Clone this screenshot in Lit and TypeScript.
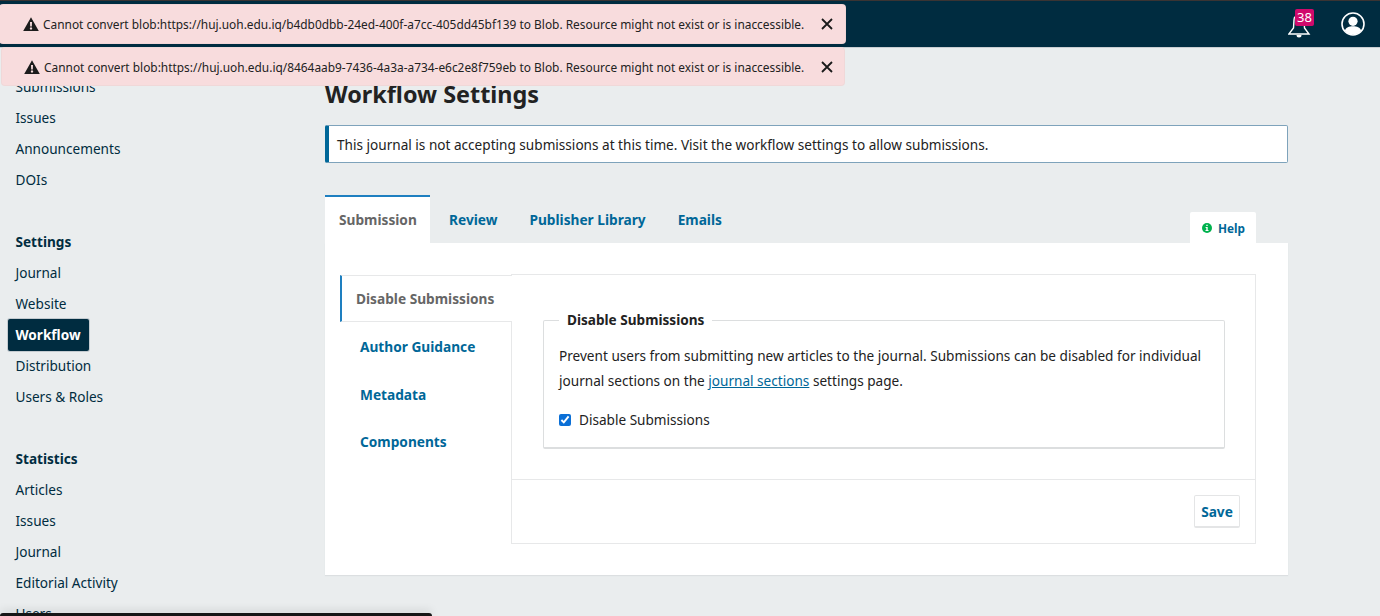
import { LitElement, html, css } from "lit";
import { customElement } from "lit/decorators.js";

const warn = html`<svg class="warn" viewBox="0 0 16 14" width="16" height="14"><path fill="#1c1c1c" fill-rule="evenodd" d="M8 0.2 L15.8 14 H0.2 Z M7 5 L7.2 9.6 H8.8 L9 5 Z M8 10.3 a1.2 1.2 0 1 0 0.01 0 Z"/></svg>`;
const closeX = html`<svg class="x" viewBox="0 0 12 12" width="12" height="12"><path d="M1 1 L11 11 M11 1 L1 11" stroke="#1a1a1a" stroke-width="1.8" fill="none"/></svg>`;

@customElement("app-root")
export class AppRoot extends LitElement {
  static styles = css`
    :host { display: block; width: 1380px; height: 616px; position: relative; overflow: hidden; background: #eaedee; font-family: "Noto Sans", sans-serif; font-size: 13.6px; color: #222; }
    * { box-sizing: border-box; }
    header { height: 47px; background: #002c40; border-top: 1px solid #3a3433; display: flex; justify-content: flex-end; align-items: center; padding-right: 15px; gap: 29px; box-shadow: 0 1px 0 #c9ced2; }
    .bell { position: relative; width: 24px; height: 26px; margin-top: 2px; }
    .badge { position: absolute; left: 7px; top: -3px; width: 19px; height: 17px; background: #d00a6c; color: #fff; font-size: 13px; line-height: 17px; text-align: center; border-radius: 2px; }
    .bell svg, .avatar { display: block; }
    .layout { display: flex; height: 569px; }
    nav { width: 325px; padding: 24px 0 0 8px; flex: none; color: #002c40; }
    .item { display: block; height: 31px; line-height: 31px; padding-left: 7.5px; white-space: nowrap; }
    .head { font-weight: 700; margin-top: 31px; }
    .current { width: 81px; height: 32px; margin: -0.5px 0; line-height: 31px; background: #002c40; color: #fff; font-weight: 700; border-radius: 2px; box-shadow: 0 0 0 1px #c4cbd0; }
    main { width: 963px; flex: none; }
    h1 { margin: 0; padding-top: 29px; font-size: 23.4px; line-height: 36px; font-weight: 700; color: #222; }
    .notice { margin-top: 13px; height: 38px; background: #fff; border: 1px solid #7ea3bb; border-left: 4px solid #006798; border-radius: 2px; padding-left: 8px; line-height: 38px; color: #222; }
    .tabs { margin-top: 32px; height: 48px; display: flex; position: relative; }
    .tab { color: #006798; font-weight: 700; font-size: 13.7px; padding: 0 16px; line-height: 46px; margin-top: 2px; white-space: nowrap; }
    .tab.on { background: #fff; color: #666; border-top: 2px solid #1e7fc0; margin-top: 0; width: 105px; padding: 0 14px; line-height: 46px; margin-right: 3px; }
    .help { position: absolute; right: 32px; bottom: 0; width: 66px; height: 31px; background: #fff; border-radius: 2px 2px 0 0; color: #006798; font-weight: 700; font-size: 11.8px; display: flex; align-items: center; gap: 6px; padding-left: 12px; }
    .panel { background: #fff; height: 332px; padding: 31px 32px 31px 15px; box-shadow: 0 1px 1px #dcdfe1; display: flex; }
    .side { width: 172px; flex: none; padding-top: 1px; margin-right: -1px; position: relative; z-index: 1; }
    .sidetab { height: 47.5px; line-height: 49px; padding-left: 20px; color: #006798; font-weight: 700; font-size: 13.7px; white-space: nowrap; }
    .sidetab.on { height: 47px; color: #666; padding-left: 14px; border-left: 2px solid #1e7fc0; border-top: 1px solid #e7e8e9; border-bottom: 1px solid #e7e8e9; background: #fff; line-height: 45px; position: relative; }
    .content { flex: 1; border: 1px solid #e7e8e9; display: flex; flex-direction: column; }
    .body { height: 205px; padding: 35px 30px 0 31px; border-bottom: 1px solid #e7e8e9; }
    fieldset { margin: 0; border: 1px solid #dcdedf; border-bottom-width: 2px; border-radius: 2px; padding: 13px 15px 0 15px; height: 139px; }
    legend { font-weight: 700; padding: 0 8px; margin-left: 0; line-height: 20px; color: #222; }
    p { margin: 0; line-height: 25px; color: #222; }
    a { color: #006798; text-decoration: underline; }
    label { display: flex; align-items: center; gap: 8px; margin-top: 14px; line-height: 25px; }
    input { margin: 0; width: 12px; height: 12px; accent-color: #0b6fd6; }
    .foot { flex: 1; display: flex; justify-content: flex-end; padding: 15px 15px 0 0; }
    button { width: 46px; height: 33px; background: #fff; border: 1px solid #e4e5e6; border-bottom-width: 2px; border-radius: 2px; color: #006798; font: 700 13.7px "Noto Sans", sans-serif; padding: 0; }
    .toast { position: absolute; background: #f8dcdd; border-radius: 3px; display: flex; align-items: center; font-size: 11.9px; color: #222; white-space: nowrap; }
    .t1 { left: 0; top: 5px; width: 845px; height: 38px; box-shadow: 0 0 0 1px #f2d5d6; padding-left: 23px; }
    .t2 { left: 2px; top: 48px; width: 842px; height: 37px; box-shadow: 0 0 0 1px #f0d8d8; padding-left: 22px; }
    .warn { margin-right: 4px; flex: none; }
    .msg { width: 777.5px; flex: none; }
    .t2 .msg { width: 776.5px; }
    .bar { position: absolute; left: 0; bottom: 0; width: 432px; height: 3px; background: #161616; border-radius: 4px 4px 0 0; box-shadow: 0 -2px 8px rgba(0,0,0,.18); }
  `;

  render() {
    const nav1 = ["Submissions", "Issues", "Announcements", "DOIs"];
    const nav3 = ["Articles", "Issues", "Journal", "Editorial Activity", "Users"];
    return html`
      <header>
        <div class="bell">
          <svg viewBox="0 0 24 26" width="24" height="26"><path d="M6 8 C6 4 8 4 11 4 C14 4 16 4 16 8 L16.5 16 L21 22 H0.8 L5.5 16 Z" fill="none" stroke="#fff" stroke-width="1.4"/><path d="M8.5 23 a2.5 2.5 0 0 0 5 0 Z" fill="#fff"/></svg>
          <span class="badge">38</span>
        </div>
        <svg class="avatar" viewBox="0 0 24 24" width="24" height="24"><circle cx="12" cy="12" r="11" fill="#002c40" stroke="#fff" stroke-width="1.6"/><circle cx="12" cy="9.3" r="4.6" fill="#fff"/><path d="M3.8 18.6 C5 15.2 8 14.2 12 14.2 C16 14.2 19 15.2 20.2 18.6 A10.4 10.4 0 0 1 3.8 18.6 Z" fill="#fff"/></svg>
      </header>
      <div class="layout">
        <nav>
          ${nav1.map((n) => html`<span class="item">${n}</span>`)}
          <span class="item head">Settings</span>
          <span class="item">Journal</span>
          <span class="item">Website</span>
          <span class="item current">Workflow</span>
          <span class="item">Distribution</span>
          <span class="item">Users &amp; Roles</span>
          <span class="item head">Statistics</span>
          ${nav3.map((n) => html`<span class="item">${n}</span>`)}
        </nav>
        <main>
          <h1>Workflow Settings</h1>
          <div class="notice">This journal is not accepting submissions at this time. Visit the workflow settings to allow submissions.</div>
          <div class="tabs">
            <div class="tab on">Submission</div>
            <div class="tab">Review</div>
            <div class="tab">Publisher Library</div>
            <div class="tab">Emails</div>
            <div class="help">
              <svg viewBox="0 0 10 10" width="10" height="10"><circle cx="5" cy="5" r="5" fill="#00b24e"/><path d="M4.3 1.8 h1.4 v1.3 h-1.4 Z M3.6 4 h2.1 v3.1 h0.8 v1 h-3 v-1 h0.8 v-2.1 h-0.7 Z" fill="#fff"/></svg>
              Help
            </div>
          </div>
          <div class="panel">
            <div class="side">
              <div class="sidetab on">Disable Submissions</div>
              <div class="sidetab">Author Guidance</div>
              <div class="sidetab">Metadata</div>
              <div class="sidetab">Components</div>
            </div>
            <div class="content">
              <div class="body">
                <fieldset>
                  <legend>Disable Submissions</legend>
                  <p>Prevent users from submitting new articles to the journal. Submissions can be disabled for individual journal sections on the <a href="#">journal sections</a> settings page.</p>
                  <label><input type="checkbox" checked />Disable Submissions</label>
                </fieldset>
              </div>
              <div class="foot"><button>Save</button></div>
            </div>
          </div>
        </main>
      </div>
      <div class="toast t1">${warn}<span class="msg">Cannot convert blob:https://huj.uoh.edu.iq/b4db0dbb-24ed-400f-a7cc-405dd45bf139 to Blob. Resource might not exist or is inaccessible.</span>${closeX}</div>
      <div class="toast t2">${warn}<span class="msg">Cannot convert blob:https://huj.uoh.edu.iq/8464aab9-7436-4a3a-a734-e6c2e8f759eb to Blob. Resource might not exist or is inaccessible.</span>${closeX}</div>
      <div class="bar"></div>
    `;
  }
}
